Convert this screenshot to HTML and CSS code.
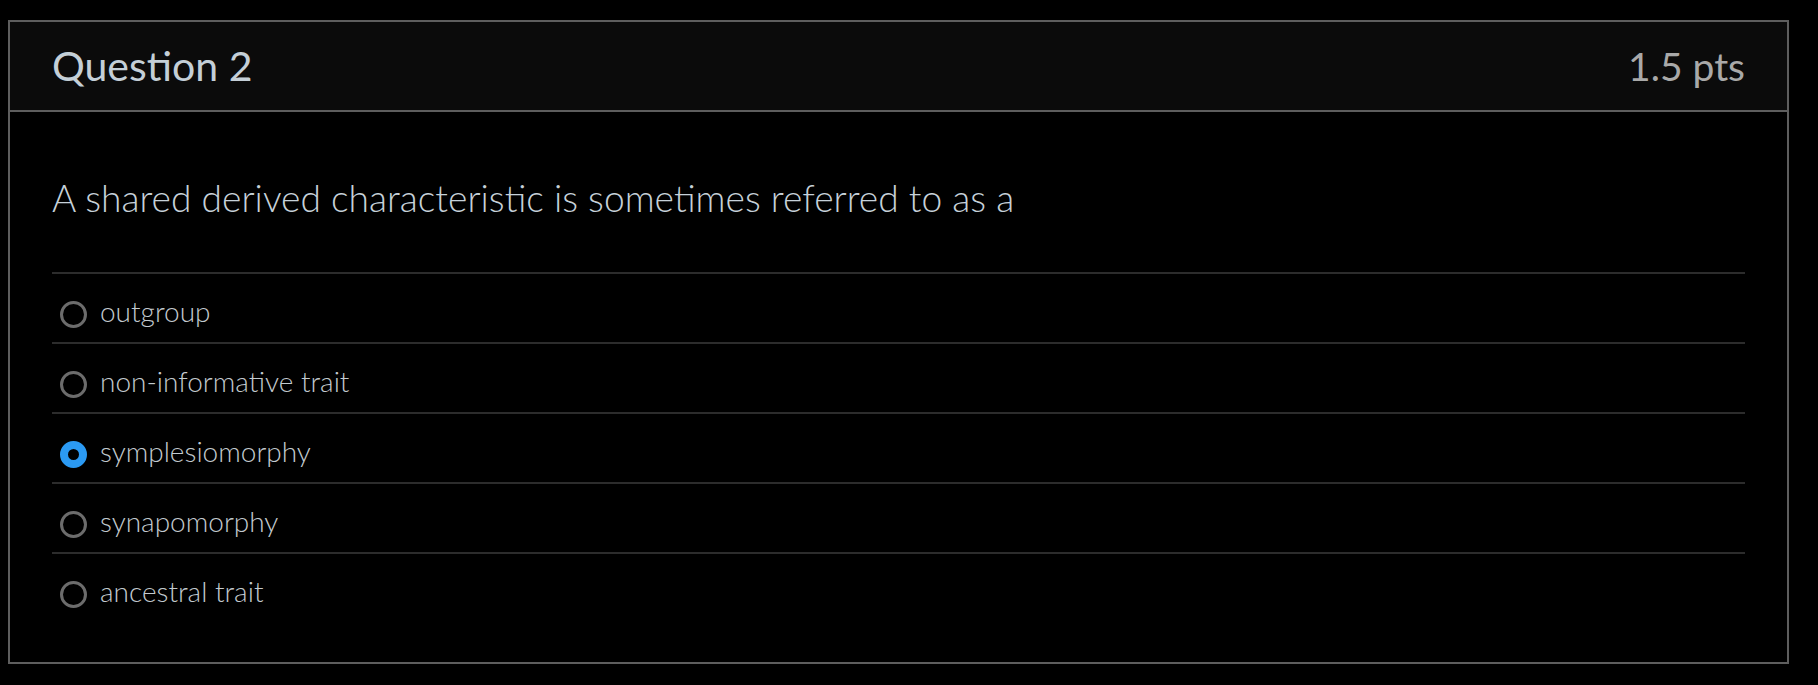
FILE: index.html
```html
<!DOCTYPE html>
<html lang="en">
<head>
  <meta charset="UTF-8">
  <title>Question 2</title>
  <meta name="viewport" content="width=device-width, initial-scale=1.0">
  <link rel="stylesheet" href="styles.css">
</head>
<body>

  <div class="question">
    <header class="question-header">
      <h2>Question 2</h2>
      <span class="points">1.5 pts</span>
    </header>

    <div class="question-body">
      <p class="question-text">A shared derived characteristic is sometimes referred to as a</p>

      <ul class="answers">
        <li><span class="radio"></span>outgroup</li>
        <li><span class="radio"></span>non-informative trait</li>
        <li><span class="radio checked"></span>symplesiomorphy</li>
        <li><span class="radio"></span>synapomorphy</li>
        <li><span class="radio"></span>ancestral trait</li>
      </ul>
    </div>
  </div>

</body>
</html>
```

FILE: styles.css
```css
body {
  font-family: Lato, "Noto Sans", sans-serif;
  background-color: #000;
  margin: 0;
}
.question {
  margin: 20px 29px 0 8px;
  border: 2px solid #5e5e5e;
  background-color: #000;
}
.question-header {
  display: flex;
  justify-content: space-between;
  align-items: center;
  height: 88px;
  padding: 0 42px;
  background-color: #0b0b0b;
  border-bottom: 2px solid #5e5e5e;
}
.question-header h2 {
  margin: 0;
  font-size: 41px;
  font-weight: 400;
  line-height: 48px;
  color: #c4cfd7;
}
.points {
  font-size: 39px;
  line-height: 48px;
  color: #a9a9a9;
}
.question-body {
  padding: 64px 42px 40px;
}
.question-text {
  margin: 0 0 52px;
  font-size: 37.2px;
  font-weight: 300;
  line-height: 44px;
  color: #c6d1d9;
}
.answers {
  list-style: none;
  margin: 0;
  padding: 0;
}
.answers li {
  display: flex;
  align-items: center;
  gap: 13px;
  height: 40px;
  padding: 17px 0 11px 8px;
  border-top: 2px solid #2c2c2c;
  font-size: 28px;
  font-weight: 300;
  color: #c3cacf;
}
.radio {
  box-sizing: border-box;
  width: 27px;
  height: 27px;
  margin-top: 6px;
  border: 3px solid #6c6c6c;
  border-radius: 50%;
  flex-shrink: 0;
}
.radio.checked {
  border: 8px solid #2b9af3;
  background-color: #000;
}
```
